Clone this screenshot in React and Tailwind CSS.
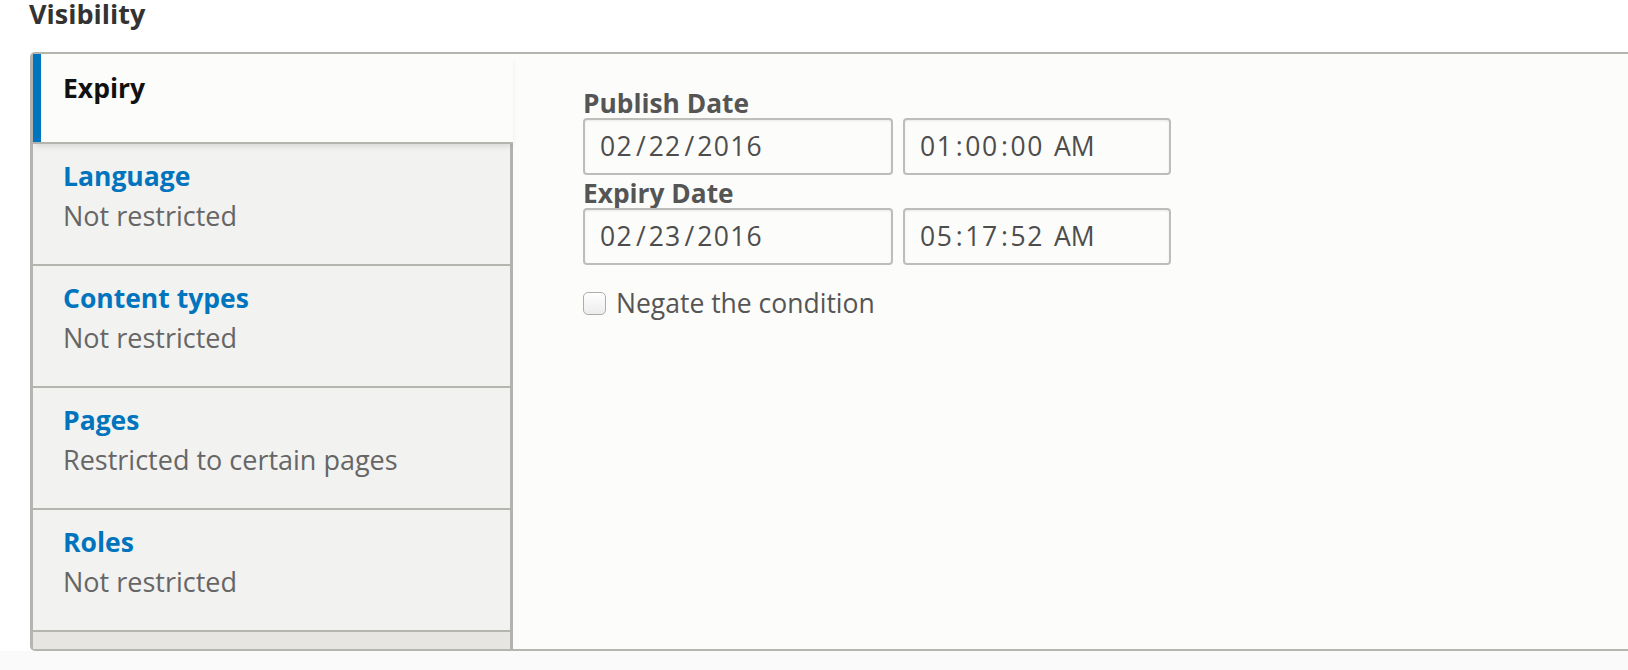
const tabs = [
  { title: "Language", desc: "Not restricted" },
  { title: "Content types", desc: "Not restricted" },
  { title: "Pages", desc: "Restricted to certain pages" },
  { title: "Roles", desc: "Not restricted" },
];

function Field({ width, children }) {
  return (
    <div
      className={`flex h-[57px] items-center rounded-[4px] border-2 border-[#bdbdb9] bg-[#fcfcfa] pl-[15px] text-[26.5px] leading-none text-[#4d4d4d] shadow-[inset_0_1px_2px_rgba(0,0,0,0.08)] ${width}`}
    >
      {children}
    </div>
  );
}

function DateText({ parts }) {
  return (
    <span className="flex items-center">
      <span className="tracking-[1.3px]">{parts[0]}</span>
      <span className="mx-[3px]">/</span>
      <span className="tracking-[1.3px]">{parts[1]}</span>
      <span className="mx-[3px]">/</span>
      <span className="tracking-[1.3px]">{parts[2]}</span>
    </span>
  );
}

function TimeText({ parts }) {
  return (
    <span className="flex items-center">
      <span className="tracking-[1.5px]">{parts[0]}</span>
      <span className="mx-[2.5px]">:</span>
      <span className="tracking-[1.5px]">{parts[1]}</span>
      <span className="mx-[2.5px]">:</span>
      <span className="tracking-[1.5px]">{parts[2]}</span>
      <span className="ml-[10px]">AM</span>
    </span>
  );
}

export default function App() {
  return (
    <div className="flex h-[670px] flex-col bg-white font-['Open_Sans',sans-serif]">
      <h2 className="ml-[29px] text-[27px] font-bold leading-[28px] text-[#333]">
        Visibility
      </h2>
      <div className="ml-[30px] mt-[24px] flex h-[599px] shrink-0 rounded-l-[5px] border-y-2 border-l-[3px] border-[#b5b5b0] bg-[#e6e5e1]">
        <div className="flex w-[480px] shrink-0 flex-col border-r-[3px] border-[#b3b3ae] bg-[#e6e5e1]">
          <div className="relative z-10 -mr-[3px] flex h-[90px] shrink-0 border-b-2 border-[#b5b5b0] bg-[#fcfcfa] shadow-[0_4px_6px_-2px_rgba(0,0,0,0.12)]">
            <div className="w-[8px] bg-[#0074bd]" />
            <div className="pl-[22px] pt-[14px] text-[26.5px] font-bold leading-[40px] text-[#111]">
              Expiry
            </div>
          </div>
          {tabs.map((t) => (
            <div
              key={t.title}
              className="h-[122px] shrink-0 border-b-2 border-[#b5b5b0] bg-[#f2f2f0] pl-[30px] pt-[12px] leading-[40px]"
            >
              <div className="text-[26.5px] font-bold text-[#0074bd]">{t.title}</div>
              <div className="text-[27px] text-[#666]">{t.desc}</div>
            </div>
          ))}
          <div className="flex-1" />
        </div>
        <div className="flex-1 bg-[#fcfcfa] pl-[70px] pt-[34px]">
          <div className="text-[26.3px] font-bold leading-[30px] text-[#555]">
            Publish Date
          </div>
          <div className="flex gap-[10px]">
            <Field width="w-[310px]">
              <DateText parts={["02", "22", "2016"]} />
            </Field>
            <Field width="w-[268px]">
              <TimeText parts={["01", "00", "00"]} />
            </Field>
          </div>
          <div className="mt-[3px] text-[26.3px] font-bold leading-[30px] text-[#555]">
            Expiry Date
          </div>
          <div className="flex gap-[10px]">
            <Field width="w-[310px]">
              <DateText parts={["02", "23", "2016"]} />
            </Field>
            <Field width="w-[268px]">
              <TimeText parts={["05", "17", "52"]} />
            </Field>
          </div>
          <div className="mt-[18px] flex items-center gap-[10px]">
            <span className="h-[23px] w-[23px] rounded-[5px] border border-[#adadad] bg-gradient-to-b from-white to-[#ececec]" />
            <span className="text-[26.5px] leading-[40px] text-[#555]">
              Negate the condition
            </span>
          </div>
        </div>
      </div>
      <div className="flex-1 bg-[#fafafa]" />
    </div>
  );
}
